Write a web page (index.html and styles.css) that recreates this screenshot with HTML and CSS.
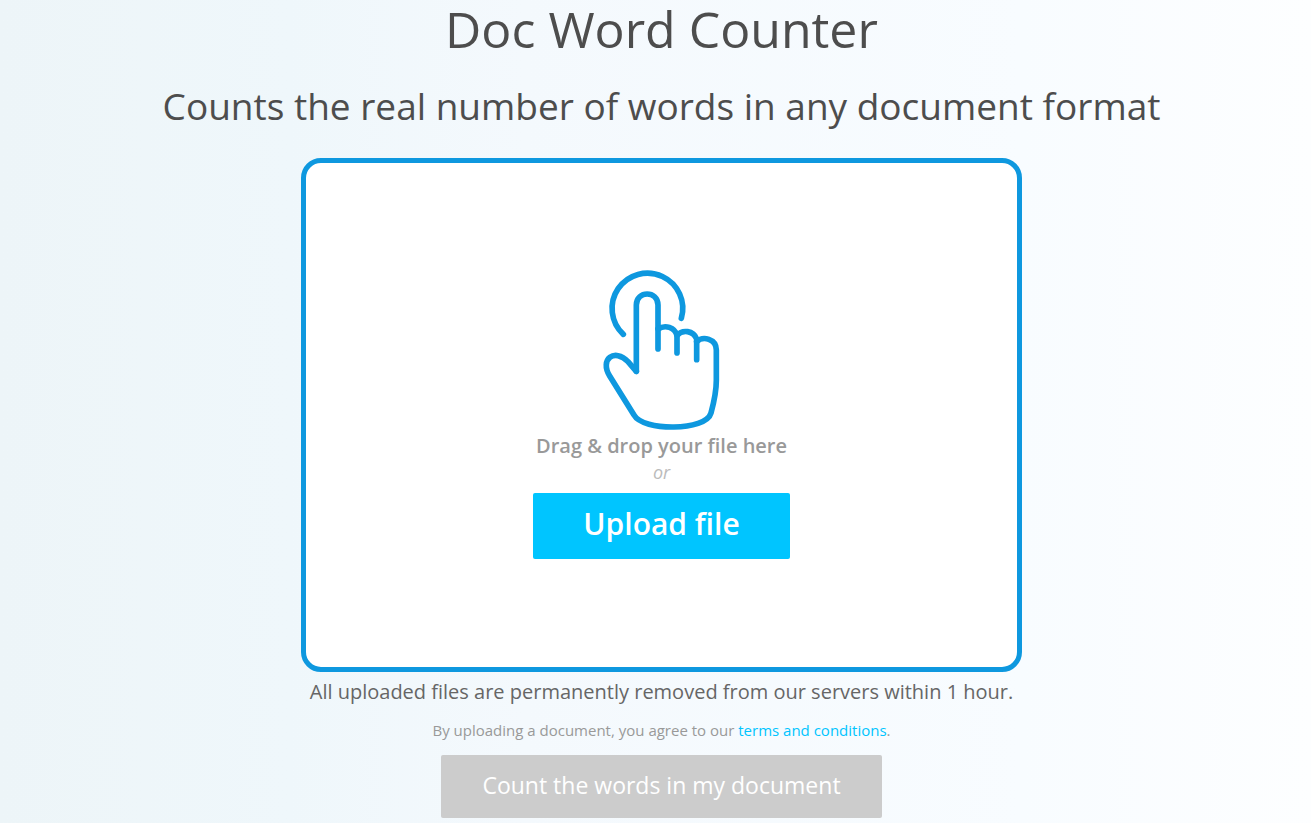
FILE: index.html
```html
<!DOCTYPE html>
<html lang="en">
  <head>
    <meta charset="UTF-8" />
    <meta name="viewport" content="width=device-width, initial-scale=1.0" />
    <title>Doc Word Counter</title>
    <link rel="stylesheet" href="styles.css">
  </head>
  <body>
    <main class="counter">
      <h1>Doc Word Counter</h1>
      <h2>Counts the real number of words in any document format</h2>

      <form class="upload-form">
        <div class="drop-zone">
          <svg class="hand-icon" viewBox="42 28 348 484" aria-hidden="true">
            <path d="M100 223A106 106 0 1 1 274 175" />
            <path d="M139 334V135C139 91 204 91 204 135V267" />
            <path d="M204 207C226 193 254 202 261 226V279" />
            <path d="M261 226C277 208 310 211 320 237V299" />
            <path d="M320 245C339 227 379 236 379 270V361C379 391 371 430 363 459C348 514 158 514 132 465L59 348C28 298 74 263 114 305L139 334" />
          </svg>
          <p class="drop-text">Drag &amp; drop your file here</p>
          <p class="drop-or">or</p>
          <button type="button" class="btn upload-button">Upload file</button>
        </div>

        <p class="notice">All uploaded files are permanently removed from our servers within 1 hour.</p>
        <p class="terms">By uploading a document, you agree to our <a href="#">terms and conditions</a>.</p>
        <button type="submit" class="btn count-button" disabled>Count the words in my document</button>
      </form>
    </main>
  </body>
</html>
```

FILE: styles.css
```css
* {
  box-sizing: border-box;
}

body {
  margin: 0;
  min-height: 100vh;
  font-family: "Open Sans", sans-serif;
  color: #4d4d4d;
  text-align: center;
  background: linear-gradient(90deg, #edf5f8 0%, #eff7fb 22%, #f4f9fd 40%, #f8fcff 78%, #fdfeff 100%);
}

h1,
h2,
p {
  margin: 0;
  font-weight: 400;
}

.counter {
  padding-left: 12px;
}

h1 {
  font-size: 50px;
  line-height: 58px;
}

h2 {
  margin-top: 20px;
  font-size: 37px;
  line-height: 56px;
}

.upload-form {
  display: flex;
  flex-direction: column;
  align-items: center;
  margin-top: 24px;
}

.drop-zone {
  display: flex;
  flex-direction: column;
  align-items: center;
  width: 100%;
  max-width: 721px;
  padding: 106px 20px 108px;
  background-color: #fff;
  border: 5px solid #0e98df;
  border-radius: 20px;
}

.hand-icon {
  width: 116px;
  height: 162px;
  overflow: visible;
  fill: none;
  stroke: #0e98df;
  stroke-width: 17;
  stroke-linecap: round;
  stroke-linejoin: round;
}

.drop-text {
  font-size: 20px;
  font-weight: 600;
  line-height: 30px;
  color: #999;
}

.drop-or {
  font-size: 18px;
  font-style: italic;
  line-height: 22px;
  color: #bbb;
}

.btn {
  border: none;
  border-radius: 2px;
  font-family: inherit;
  color: #fff;
}

.upload-button {
  margin-top: 10px;
  padding: 10px 50px 14px;
  font-size: 30px;
  font-weight: 600;
  line-height: 42px;
  background-color: #00c5ff;
  cursor: pointer;
}

.notice {
  margin-top: 6px;
  font-size: 20px;
  line-height: 28px;
  color: #666;
}

.terms {
  margin-top: 13px;
  font-size: 15px;
  line-height: 22px;
  color: #999;
}

.terms a {
  color: #00c5ff;
  text-decoration: none;
}

.count-button {
  margin-top: 14px;
  padding: 14px 41px 17px;
  font-size: 23px;
  line-height: 32px;
  background-color: #ccc;
}
```
